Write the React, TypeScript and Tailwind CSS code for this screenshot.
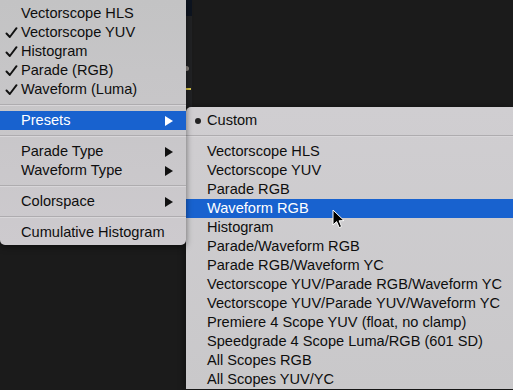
import React from "react";

const font = { fontFamily: '"Liberation Sans", Arial, sans-serif' };

function Arrow({ white }: { white?: boolean }) {
  return (
    <svg width="8" height="10" viewBox="0 0 8 10" className="shrink-0">
      <polygon points="0,0 8,5 0,10" fill={white ? "#ffffff" : "#111111"} />
    </svg>
  );
}

function Check() {
  return (
    <svg width="13" height="12" viewBox="0 0 13 12">
      <path d="M1.5 6.5 L4.8 10 L11.5 1.2" fill="none" stroke="#111" strokeWidth="1.9" strokeLinecap="round" strokeLinejoin="round" />
    </svg>
  );
}

function Sep() {
  return (
    <div className="h-[12px] flex flex-col justify-center">
      <div className="h-px bg-[#aeacaf]" />
      <div className="h-px bg-[#d8d6d9]" />
    </div>
  );
}

type Row = { label: string; checked?: boolean; sub?: boolean; active?: boolean };

function LeftRow({ label, checked, sub, active }: Row) {
  return (
    <div
      className={
        "h-[19px] flex items-center pr-[13px] " +
        (active ? "bg-[#1862cf] text-white" : "text-[#0e0e0e]")
      }
    >
      <div className="w-[21px] flex justify-center pl-[2px]">{checked && <Check />}</div>
      <span className="flex-1 leading-none">{label}</span>
      {sub && <Arrow white={active} />}
    </div>
  );
}

function RightRow({ label, active, bullet }: { label: string; active?: boolean; bullet?: boolean }) {
  return (
    <div
      className={
        "h-[19px] flex items-center " +
        (active ? "bg-[#1862cf] text-white" : "text-[#0e0e0e]")
      }
    >
      <div className="w-[21px] flex justify-center pl-[2px]">
        {bullet && <div className="w-[6px] h-[6px] rounded-full bg-[#222]" />}
      </div>
      <span className="leading-none">{label}</span>
    </div>
  );
}

const presets = [
  "Vectorscope HLS",
  "Vectorscope YUV",
  "Parade RGB",
  "Waveform RGB",
  "Histogram",
  "Parade/Waveform RGB",
  "Parade RGB/Waveform YC",
  "Vectorscope YUV/Parade RGB/Waveform YC",
  "Vectorscope YUV/Parade YUV/Waveform YC",
  "Premiere 4 Scope YUV (float, no clamp)",
  "Speedgrade 4 Scope Luma/RGB (601 SD)",
  "All Scopes RGB",
  "All Scopes YUV/YC",
];

export default function App() {
  return (
    <div
      className="w-[513px] h-[390px] bg-[#1b1b1b] overflow-hidden relative flex items-start text-[14.6px]"
      style={font}
    >
      {/* main menu */}
      <div className="w-[186px] shrink-0 pt-[4px] pb-[3px] rounded-b-[5px] bg-gradient-to-b from-[#c3c3c4] to-[#cdcace] shadow-[0_2px_6px_rgba(0,0,0,0.5)] z-10">
        <LeftRow label="Vectorscope HLS" />
        <LeftRow label="Vectorscope YUV" checked />
        <LeftRow label="Histogram" checked />
        <LeftRow label="Parade (RGB)" checked />
        <LeftRow label="Waveform (Luma)" checked />
        <Sep />
        <LeftRow label="Presets" sub active />
        <Sep />
        <LeftRow label="Parade Type" sub />
        <LeftRow label="Waveform Type" sub />
        <Sep />
        <LeftRow label="Colorspace" sub />
        <Sep />
        <LeftRow label="Cumulative Histogram" />
      </div>

      <div className="flex-1 flex flex-col">
        <div className="h-[107px] flex">
          <div className="w-[6px] bg-[#212224] flex flex-col">
            <div className="h-[16px] bg-[#0d1420]" />
            <div className="h-[50px]" />
            <div className="h-[5px] w-[3px] rounded-r-full bg-[#8a8580]" />
            <div className="h-[17px]" />
            <div className="h-[2px] w-[5px] bg-[#d8c54a]" />
          </div>
        </div>

        {/* presets submenu */}
        <div className="pt-[4px] rounded-tl-[5px] bg-gradient-to-b from-[#d0ced1] to-[#c9c8ca] shadow-[-2px_0_6px_rgba(0,0,0,0.35)]">
          <RightRow label="Custom" bullet />
          <Sep />
          {presets.map((p) => (
            <RightRow key={p} label={p} active={p === "Waveform RGB"} />
          ))}
        </div>
      </div>

      {/* mouse pointer */}
      <svg
        className="absolute left-[332px] top-[209px] z-20"
        width="13"
        height="20"
        viewBox="0 0 13 20"
      >
        <path
          d="M1 1 L1 16 L4.6 12.6 L7.2 18.6 L9.6 17.6 L7.1 11.8 L12 11.6 Z"
          fill="#000"
          stroke="#fff"
          strokeWidth="1"
          strokeLinejoin="round"
        />
      </svg>
    </div>
  );
}
